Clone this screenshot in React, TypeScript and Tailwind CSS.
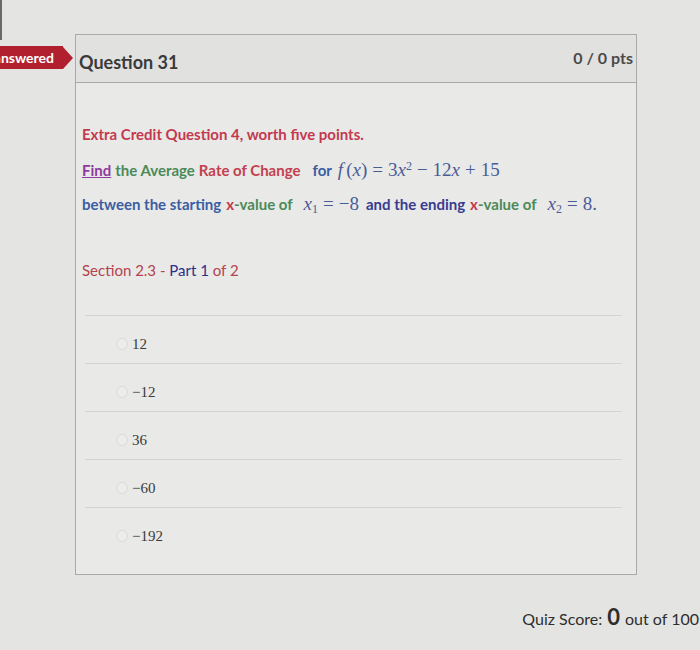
import React from "react";

const lato = { fontFamily: "Lato, 'Open Sans', sans-serif" };

function M({ children }: { children: React.ReactNode }) {
  return <span className="font-['Liberation_Serif',serif] text-[19px] text-[#4a5c96]">{children}</span>;
}

function I({ children }: { children: React.ReactNode }) {
  return <i className="font-['Liberation_Serif',serif]">{children}</i>;
}

function Op({ children }: { children: React.ReactNode }) {
  return <span className="mx-[5px]">{children}</span>;
}

const answers = ["12", "\u221212", "36", "\u221260", "\u2212192"];

function Answer({ value }: { value: string }) {
  return (
    <div className="flex h-[48px] items-center border-t border-[#d4d4d4] pl-[31px] pt-[9px]">
      <span className="mr-[4px] h-[12px] w-[12px] rounded-full border border-[#dadada] bg-[#ececec]" />
      <span className="font-['Liberation_Serif',serif] text-[15px] text-[#3a3a3a]">{value}</span>
    </div>
  );
}

export default function App() {
  return (
    <div className="relative h-[650px] w-[700px] overflow-hidden bg-[#e4e4e2]" style={lato}>
      <div className="absolute left-0 top-0 h-[40px] w-[2px] bg-[#6a6a6a]" />
      <div className="ml-[75px] mt-[34px] w-[562px] border border-[#a9a9a9] bg-[#e9e9e8]">
        <div className="flex h-[48px] items-center justify-between border-b border-[#a8a8a8] bg-[#e1e1e0] px-[3px] pt-[7px]">
          <span className="text-[18px] font-bold text-[#3a3a3a]">Question 31</span>
          <span className="pb-[8px] text-[16px] font-bold text-[#4a4a4a]">0 / 0 pts</span>
        </div>
        <div className="pb-[19px] pl-[6px] pr-[14px] pt-[40px] text-[15px] font-bold leading-[22px]">
          <p className="text-[#c3394f]">Extra Credit Question 4, worth five points.</p>
          <p className="mt-[14px] flex h-[22px] items-baseline">
            <span className="text-[#8d3c9e] underline">Find</span>
            <span className="ml-[4px] text-[#4b8a58]">the Average</span>
            <span className="ml-[4px] text-[#c3404f]">Rate of Change</span>
            <span className="ml-[12px] text-[#3b5ea2]">for</span>
            <span className="ml-[6px] font-normal">
              <M>
                <I>f</I>
                <span className="ml-[3px]">(</span>
                <I>x</I>)<Op>=</Op>3<I>x</I>
                <sup className="text-[12px] leading-none">2</sup>
                <Op>{"\u2212"}</Op>12<I>x</I>
                <Op>+</Op>15
              </M>
            </span>
          </p>
          <p className="mt-[12px] flex h-[22px] items-baseline">
            <span className="text-[#3b5ea2]">between the starting</span>
            <span className="ml-[5px] text-[#c3394f]">x</span>
            <span className="text-[#4b8a58]">-value of</span>
            <span className="ml-[11px] font-normal">
              <M>
                <I>x</I>
                <sub className="text-[12px] leading-none">1</sub>
                <Op>=</Op>
                {"\u2212"}8
              </M>
            </span>
            <span className="ml-[7px] text-[#383c90]">and the ending</span>
            <span className="ml-[5px] text-[#c3394f]">x</span>
            <span className="text-[#4b8a58]">-value of</span>
            <span className="ml-[11px] font-normal">
              <M>
                <I>x</I>
                <sub className="text-[12px] leading-none">2</sub>
                <Op>=</Op>8.
              </M>
            </span>
          </p>
          <p className="mt-[44px] font-normal">
            <span className="text-[#b5424f]">Section 2.3 - </span>
            <span className="text-[#2d2e8a]">Part 1 </span>
            <span className="text-[#b5424f]">of 2</span>
          </p>
          <div className="ml-[3px] mt-[34px] font-normal">
            {answers.map((a) => (
              <Answer key={a} value={a} />
            ))}
          </div>
        </div>
      </div>
      <div className="absolute left-0 top-[46px] flex h-[23px] items-center">
        <div className="flex h-full w-[63px] items-center justify-end bg-[#b1202f] pr-[9px] text-[14px] font-bold text-white">
          <span className="whitespace-nowrap">Unanswered</span>
        </div>
        <div className="h-0 w-0 border-y-[11.5px] border-l-[10px] border-y-transparent border-l-[#b1202f]" />
      </div>
      <div className="mt-[29px] flex items-baseline justify-end whitespace-nowrap pr-[1px] text-[16px] leading-[26px] text-[#2e2e2e]">
        <span>Quiz Score:</span>
        <span className="mx-[5px] text-[22px] font-bold">0</span>
        <span>out of 100</span>
      </div>
    </div>
  );
}
